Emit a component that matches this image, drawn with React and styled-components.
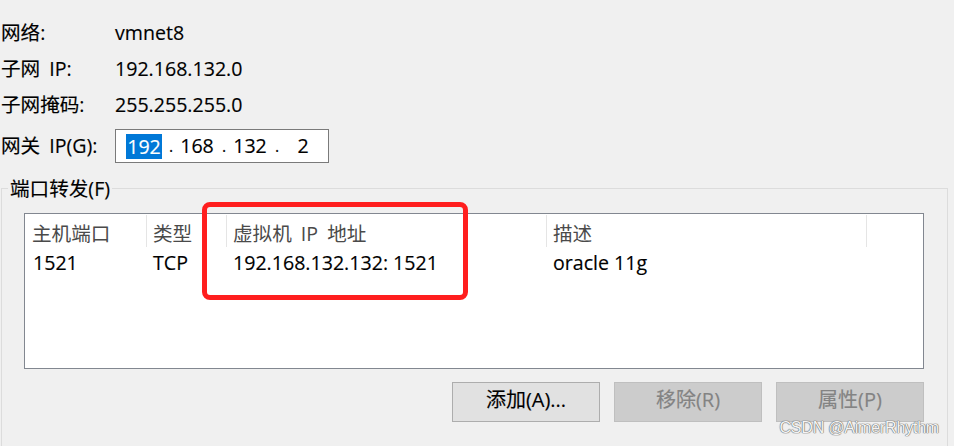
import React from "react";
import styled, { createGlobalStyle } from "styled-components";

const GlobalStyle = createGlobalStyle`
  html, body { margin: 0; padding: 0; background: #f0f0f0; }
  * { box-sizing: border-box; }
`;

const FONT = `"Open Sans", "Noto Sans CJK SC", sans-serif`;

const Page = styled.div`
  position: relative;
  width: 954px;
  height: 446px;
  overflow: hidden;
  background: #f0f0f0;
  padding-left: 1px;
  font-family: ${FONT};
  font-size: 19.6px;
  color: #000;
  -webkit-text-stroke: 0.15px #000;
`;

const InfoGrid = styled.div`
  display: grid;
  grid-template-columns: 114px auto;
  grid-template-rows: 36px 36px 36px 46px;
  align-items: center;
  padding-top: 15px;
`;

const Label = styled.div`
  white-space: nowrap;
  line-height: 24px;
  word-spacing: 4px;
`;

const Value = styled.div`
  white-space: nowrap;
  line-height: 24px;
`;

const IpBox = styled.div`
  display: flex;
  align-items: center;
  width: 214px;
  height: 34px;
  padding-left: 8px;
  background: #fff;
  border: 1px solid #7a7a7a;
`;

const IpField = styled.span`
  width: 40px;
  display: flex;
  justify-content: center;
  line-height: 24px;
`;

const Selected = styled.span`
  background: #0078d7;
  color: #fff;
  -webkit-text-stroke: 0.15px #fff;
  padding: 0 1px;
  line-height: 25px;
`;

const IpDot = styled.span`
  width: 13px;
  line-height: 24px;
  text-align: left;
  padding-left: 5px;
  font-size: 16px;
`;

const GroupBox = styled.div`
  position: relative;
  width: 947px;
  height: 300px;
  margin-top: 19px;
  border: 1px solid #dcdcdc;
  padding: 24px 23px 0 22px;
`;

const Legend = styled.div`
  position: absolute;
  top: -12px;
  left: 6px;
  padding: 0 2px;
  background: #f0f0f0;
  line-height: 24px;
  color: #000;
`;

const ListBox = styled.div`
  position: relative;
  height: 156px;
  background: #fff;
  border: 1px solid #828790;
`;

const Columns = `
  display: grid;
  grid-template-columns: 122px 80px 320px 320px 1fr;
`;

const HeaderRow = styled.div`
  ${Columns};
  height: 34px;
  padding-top: 1px;
`;

const HeaderCell = styled.div`
  height: 32px;
  display: flex;
  align-items: center;
  padding: 3px 0 0 ${(p) => (p.$first ? 7 : 6)}px;
  border-right: ${(p) => (p.$last ? "none" : "1px solid #e5e5e5")};
  color: #4a4a4a;
  -webkit-text-stroke: 0;
  white-space: pre;
  word-spacing: 4px;
`;

const DataRow = styled.div`
  ${Columns};
  height: 30px;
  align-items: center;
`;

const DataCell = styled.div`
  padding-left: ${(p) => (p.$first ? 8 : 6)}px;
  white-space: nowrap;
  line-height: 24px;
`;

const Highlight = styled.div`
  position: absolute;
  left: 177px;
  top: -12px;
  width: 266px;
  height: 98px;
  border: 5px solid #ff1e1e;
  border-radius: 8px;
  pointer-events: none;
`;

const ButtonRow = styled.div`
  display: flex;
  justify-content: flex-end;
  gap: 14px;
  margin-top: 13px;
`;

const Button = styled.button`
  width: 148px;
  height: 40px;
  font-family: ${FONT};
  font-size: 20px;
  line-height: 24px;
  padding: 0 0 4px;
  background: ${(p) => (p.disabled ? "#cccccc" : "#e1e1e1")};
  border: 1px solid ${(p) => (p.disabled ? "#bfbfbf" : "#adadad")};
  color: ${(p) => (p.disabled ? "#838383" : "#000")};
  -webkit-text-stroke: 0.15px ${(p) => (p.disabled ? "#838383" : "#000")};
  border-radius: 0;
`;

const Watermark = styled.div`
  position: absolute;
  right: 15px;
  bottom: 10px;
  font-family: "Liberation Sans", sans-serif;
  font-size: 16px;
  line-height: 16px;
  letter-spacing: -0.2px;
  color: #f4f4f4;
  -webkit-text-stroke: 0;
  text-shadow: 0 0 1px #6a6a6a, 0 0 1px #6a6a6a, 0 0 1px #6a6a6a;
  white-space: nowrap;
`;

const columns = [
  { head: "主机端口", value: "1521" },
  { head: "类型", value: "TCP" },
  { head: "虚拟机 IP 地址", value: "192.168.132.132: 1521" },
  { head: "描述", value: "oracle 11g" },
  { head: "", value: "" },
];

export default function App() {
  return (
    <>
      <GlobalStyle />
      <Page>
        <InfoGrid>
          <Label>网络:</Label>
          <Value>vmnet8</Value>
          <Label>子网 IP:</Label>
          <Value>192.168.132.0</Value>
          <Label>子网掩码:</Label>
          <Value>255.255.255.0</Value>
          <Label>网关 IP(G):</Label>
          <IpBox>
            <IpField>
              <Selected>192</Selected>
            </IpField>
            <IpDot>.</IpDot>
            <IpField>168</IpField>
            <IpDot>.</IpDot>
            <IpField>132</IpField>
            <IpDot>.</IpDot>
            <IpField>2</IpField>
          </IpBox>
        </InfoGrid>

        <GroupBox>
          <Legend>端口转发(F)</Legend>
          <ListBox>
            <HeaderRow>
              {columns.map((c, i) => (
                <HeaderCell key={i} $first={i === 0} $last={i === columns.length - 1}>
                  {c.head}
                </HeaderCell>
              ))}
            </HeaderRow>
            <DataRow>
              {columns.map((c, i) => (
                <DataCell key={i} $first={i === 0}>
                  {c.value}
                </DataCell>
              ))}
            </DataRow>
            <Highlight />
          </ListBox>
          <ButtonRow>
            <Button>添加(A)...</Button>
            <Button disabled>移除(R)</Button>
            <Button disabled>属性(P)</Button>
          </ButtonRow>
        </GroupBox>

        <Watermark>CSDN @AimerRhythm</Watermark>
      </Page>
    </>
  );
}
